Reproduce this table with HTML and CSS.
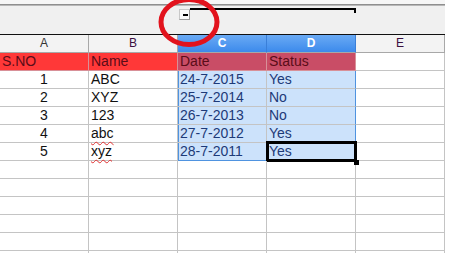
FILE: index.html
```html
<!DOCTYPE html>
<html>
<head>
<meta charset="utf-8">
<link rel="stylesheet" href="styles.css">
</head>
<body>
<div class="sheet">
  <div class="outline-bar">
    <div class="group-toggle"><span class="dash"></span></div>
    <div class="group-line"></div>
  </div>

  <div class="grid">
    <div class="colhead">A</div>
    <div class="colhead purple">B</div>
    <div class="colhead picked">C</div>
    <div class="colhead picked">D</div>
    <div class="colhead purple">E</div>

    <div class="cell title">S.NO</div>
    <div class="cell title">Name</div>
    <div class="cell title dark">Date</div>
    <div class="cell title dark">Status</div>
    <div class="cell"></div>

    <div class="cell num">1</div>
    <div class="cell">ABC</div>
    <div class="cell sel sel-l">24-7-2015</div>
    <div class="cell sel sel-r">Yes</div>
    <div class="cell"></div>

    <div class="cell num">2</div>
    <div class="cell">XYZ</div>
    <div class="cell sel sel-l">25-7-2014</div>
    <div class="cell sel sel-r">No</div>
    <div class="cell"></div>

    <div class="cell num">3</div>
    <div class="cell">123</div>
    <div class="cell sel sel-l">26-7-2013</div>
    <div class="cell sel sel-r">No</div>
    <div class="cell"></div>

    <div class="cell num">4</div>
    <div class="cell"><span class="typo">abc</span></div>
    <div class="cell sel sel-l">27-7-2012</div>
    <div class="cell sel sel-r">Yes</div>
    <div class="cell"></div>

    <div class="cell num">5</div>
    <div class="cell"><span class="typo">xyz</span></div>
    <div class="cell sel sel-l sel-b">28-7-2011</div>
    <div class="cell sel sel-r sel-b active">Yes</div>
    <div class="cell"></div>

    <div class="cell"></div><div class="cell"></div><div class="cell"></div><div class="cell"></div><div class="cell"></div>
    <div class="cell"></div><div class="cell"></div><div class="cell"></div><div class="cell"></div><div class="cell"></div>
    <div class="cell"></div><div class="cell"></div><div class="cell"></div><div class="cell"></div><div class="cell"></div>
    <div class="cell"></div><div class="cell"></div><div class="cell"></div><div class="cell"></div><div class="cell"></div>
    <div class="cell"></div><div class="cell"></div><div class="cell"></div><div class="cell"></div><div class="cell"></div>
    <div class="cell"></div><div class="cell"></div><div class="cell"></div><div class="cell"></div><div class="cell"></div>
  </div>

  <svg class="ring" width="70" height="56" viewBox="0 0 70 56">
    <ellipse cx="35" cy="25" rx="28" ry="22.5" fill="none" stroke="#e2131d" stroke-width="5"/>
  </svg>
</div>
</body>
</html>
```
FILE: styles.css
```css
html, body {
  margin: 0;
  padding: 0;
  background: #ffffff;
}

body {
  width: 450px;
  height: 253px;
  overflow: hidden;
  font-family: "Liberation Sans", Arial, sans-serif;
}

.sheet {
  position: relative;
  width: 445px;
  height: 253px;
  overflow: hidden;
}

/* outline / grouping strip above the column headers */
.outline-bar {
  position: relative;
  height: 30px;
  background: #f0f0f0;
  border-top: 4px solid #f6f6f6;
  box-shadow: inset 0 1px 0 #8f8f8f, inset 0 2px 0 #b8b8b8;
  border-bottom: 1px solid #101010;
}

.group-toggle {
  position: absolute;
  left: 179px;
  top: 5px;
  width: 9px;
  height: 9px;
  background: #fbfbfb;
  border: 1px solid #c8c8c8;
  border-right-color: #9a9a9a;
  border-bottom-color: #9a9a9a;
}

.group-toggle .dash {
  position: absolute;
  left: 3px;
  top: 4px;
  width: 5px;
  height: 2px;
  background: #000;
}

.group-line {
  position: absolute;
  left: 190px;
  top: 4px;
  width: 164px;
  height: 2px;
  background: #000;
}

.group-line::after {
  content: "";
  position: absolute;
  right: -2px;
  top: 0;
  width: 2px;
  height: 5px;
  background: #000;
}

/* the cell grid */
.grid {
  display: grid;
  grid-template-columns: repeat(5, 89px);
  grid-auto-rows: 18px;
}

.colhead {
  box-sizing: border-box;
  background: #f3f3f3;
  border-right: 1px solid #a8a8a8;
  border-bottom: 1px solid #a8a8a8;
  text-align: center;
  font-size: 12px;
  line-height: 17px;
  color: #333;
}

.colhead.purple {
  color: #3a1040;
}

.colhead.picked {
  background: linear-gradient(#6aaaf4, #3c8aec);
  color: #ffffff;
  font-weight: bold;
  border-right-color: #3a7fd8;
}

.cell {
  box-sizing: border-box;
  border-right: 1px solid #c4c4c4;
  border-bottom: 1px solid #c4c4c4;
  padding: 0 2px;
  font-size: 14px;
  line-height: 17px;
  color: #111;
  white-space: nowrap;
  overflow: visible;
  position: relative;
}

.cell.num {
  text-align: center;
}

.cell.title {
  background: #ff3838;
  color: #5a0c18;
  border-color: #d89098;
}

.cell.title.dark {
  background: #c94d66;
}

.cell.sel {
  background: #cce2fb;
  color: #1d3a78;
}

.cell.sel-l {
  box-shadow: inset 1px 0 0 #4f93e0;
}

.cell.sel-r {
  border-right-color: #4f93e0;
}

.cell.sel-b {
  border-bottom-color: #4f93e0;
}

/* active cell cursor with fill handle */
.cell.active::after {
  content: "";
  position: absolute;
  left: -1px;
  top: -2px;
  right: -2px;
  bottom: -2px;
  border: 3px solid #000;
}

.cell.active::before {
  content: "";
  position: absolute;
  right: -4px;
  bottom: -5px;
  width: 5px;
  height: 5px;
  background: #000;
  z-index: 1;
}

.typo {
  text-decoration: underline wavy #e03030;
  text-decoration-thickness: 1px;
  text-underline-offset: 3px;
}

/* red highlight ring around the group toggle */
.ring {
  position: absolute;
  left: 154px;
  top: -3px;
}
```
